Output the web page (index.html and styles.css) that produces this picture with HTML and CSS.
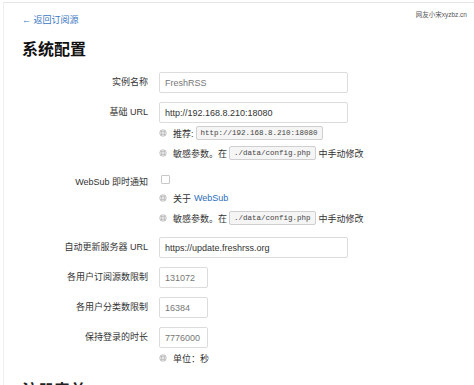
FILE: index.html
```html
<!DOCTYPE html>
<html lang="zh-CN">
<head>
<meta charset="utf-8">
<title>系统配置</title>
<link rel="stylesheet" href="styles.css">
</head>
<body>
<div class="frame">
  <div class="watermark">网友小宋xyzbz.cn</div>
  <a class="back" href="#">← 返回订阅源</a>
  <h1 class="title">系统配置</h1>
  <form class="form">
    <div class="group">
      <label class="label">实例名称</label>
      <div class="controls">
        <input class="input wide muted" type="text" value="FreshRSS">
      </div>
    </div>
    <div class="group">
      <label class="label">基础 URL</label>
      <div class="controls">
        <input class="input wide" type="text" value="http://192.168.8.210:18080">
        <p class="help"><svg class="icon" viewBox="0 0 10 10"><circle cx="5" cy="5" r="4" /><circle cx="5" cy="5" r="1.8" /><path d="M2.2 2.2L3.7 3.7M7.8 2.2L6.3 3.7M2.2 7.8L3.7 6.3M7.8 7.8L6.3 6.3" /></svg>推荐: <kbd class="code">http://192.168.8.210:18080</kbd></p>
        <p class="help"><svg class="icon" viewBox="0 0 10 10"><circle cx="5" cy="5" r="4" /><circle cx="5" cy="5" r="1.8" /><path d="M2.2 2.2L3.7 3.7M7.8 2.2L6.3 3.7M2.2 7.8L3.7 6.3M7.8 7.8L6.3 6.3" /></svg>敏感参数。在 <kbd class="code">./data/config.php</kbd> 中手动修改</p>
      </div>
    </div>
    <div class="group">
      <label class="label">WebSub 即时通知</label>
      <div class="controls">
        <input class="checkbox" type="checkbox">
        <p class="help"><svg class="icon" viewBox="0 0 10 10"><circle cx="5" cy="5" r="4" /><circle cx="5" cy="5" r="1.8" /><path d="M2.2 2.2L3.7 3.7M7.8 2.2L6.3 3.7M2.2 7.8L3.7 6.3M7.8 7.8L6.3 6.3" /></svg>关于 <a class="link" href="#">WebSub</a></p>
        <p class="help"><svg class="icon" viewBox="0 0 10 10"><circle cx="5" cy="5" r="4" /><circle cx="5" cy="5" r="1.8" /><path d="M2.2 2.2L3.7 3.7M7.8 2.2L6.3 3.7M2.2 7.8L3.7 6.3M7.8 7.8L6.3 6.3" /></svg>敏感参数。在 <kbd class="code">./data/config.php</kbd> 中手动修改</p>
      </div>
    </div>
    <div class="group">
      <label class="label">自动更新服务器 URL</label>
      <div class="controls">
        <input class="input wide" type="text" value="https://update.freshrss.org">
      </div>
    </div>
    <div class="group">
      <label class="label">各用户订阅源数限制</label>
      <div class="controls">
        <input class="input narrow muted" type="text" value="131072">
      </div>
    </div>
    <div class="group">
      <label class="label">各用户分类数限制</label>
      <div class="controls">
        <input class="input narrow muted" type="text" value="16384">
      </div>
    </div>
    <div class="group">
      <label class="label">保持登录的时长</label>
      <div class="controls">
        <input class="input narrow muted" type="text" value="7776000">
        <p class="help"><svg class="icon" viewBox="0 0 10 10"><circle cx="5" cy="5" r="4" /><circle cx="5" cy="5" r="1.8" /><path d="M2.2 2.2L3.7 3.7M7.8 2.2L6.3 3.7M2.2 7.8L3.7 6.3M7.8 7.8L6.3 6.3" /></svg>单位：秒</p>
      </div>
    </div>
  </form>
  <h2 class="subtitle">注册表单</h2>
</div>
</body>
</html>
```
FILE: styles.css
```css
html, body {
  margin: 0;
  padding: 0;
  background: #fff;
  overflow: hidden;
}
body {
  font-family: "Liberation Sans", "Noto Sans CJK SC", sans-serif;
  font-size: 9px;
  color: #333;
}
.frame {
  position: relative;
  margin: 2px 0 0 3px;
  border-top: 1px solid #e6e6e6;
  border-left: 1px solid #eeeeee;
  padding: 11px 0 0 18px;
  min-height: 400px;
}
.watermark {
  position: absolute;
  top: 6px;
  right: 7px;
  font-size: 6.5px;
  color: #555;
}
.back {
  display: block;
  line-height: 12px;
  color: #3a78c2;
  text-decoration: none;
  font-size: 9px;
}
.title {
  margin: 14px 0 12px;
  font-size: 16px;
  line-height: 20px;
  font-weight: bold;
  color: #111;
}
.form {
  margin: 0;
}
.group {
  display: flex;
  margin-bottom: 9px;
  margin-left: -21px;
}
.label {
  width: 147px;
  flex: none;
  text-align: right;
  line-height: 21px;
  color: #333;
}
.controls {
  margin-left: 11px;
  display: flex;
  flex-direction: column;
  align-items: flex-start;
}
.input {
  box-sizing: border-box;
  height: 21px;
  border: 1px solid #dcdcdc;
  border-radius: 2px;
  padding: 0 5px;
  font-family: "Liberation Sans", "Noto Sans CJK SC", sans-serif;
  font-size: 9px;
  color: #333;
  background: #fff;
  outline: none;
}
.input.muted {
  color: #777;
}
.wide {
  width: 189px;
}
.narrow {
  width: 49px;
}
.help {
  margin: 0;
  height: 20px;
  display: flex;
  align-items: center;
  white-space: nowrap;
  color: #333;
}
.icon {
  width: 8px;
  height: 8px;
  margin-right: 6px;
  fill: none;
  stroke: #aaa;
  stroke-width: 1;
}
.code {
  display: inline-block;
  box-sizing: border-box;
  height: 14px;
  line-height: 12px;
  padding: 0 4px;
  margin: 0 3px 0 2px;
  border: 1px solid #cfcfcf;
  border-radius: 2px;
  background: #f5f5f5;
  font-family: "Liberation Mono", monospace;
  font-size: 7.5px;
  color: #444;
}
.link {
  color: #2a6ebb;
  text-decoration: none;
  margin-left: 3px;
}
.checkbox {
  appearance: none;
  -webkit-appearance: none;
  display: block;
  box-sizing: border-box;
  width: 9px;
  height: 9px;
  margin: 3px 0 4px 2px;
  padding: 0;
  border: 1px solid #c8c8c8;
  border-radius: 1px;
  background: #fff;
}
.subtitle {
  margin: 13px 0 0;
  font-size: 16px;
  line-height: 20px;
  font-weight: bold;
  color: #222;
}
```
